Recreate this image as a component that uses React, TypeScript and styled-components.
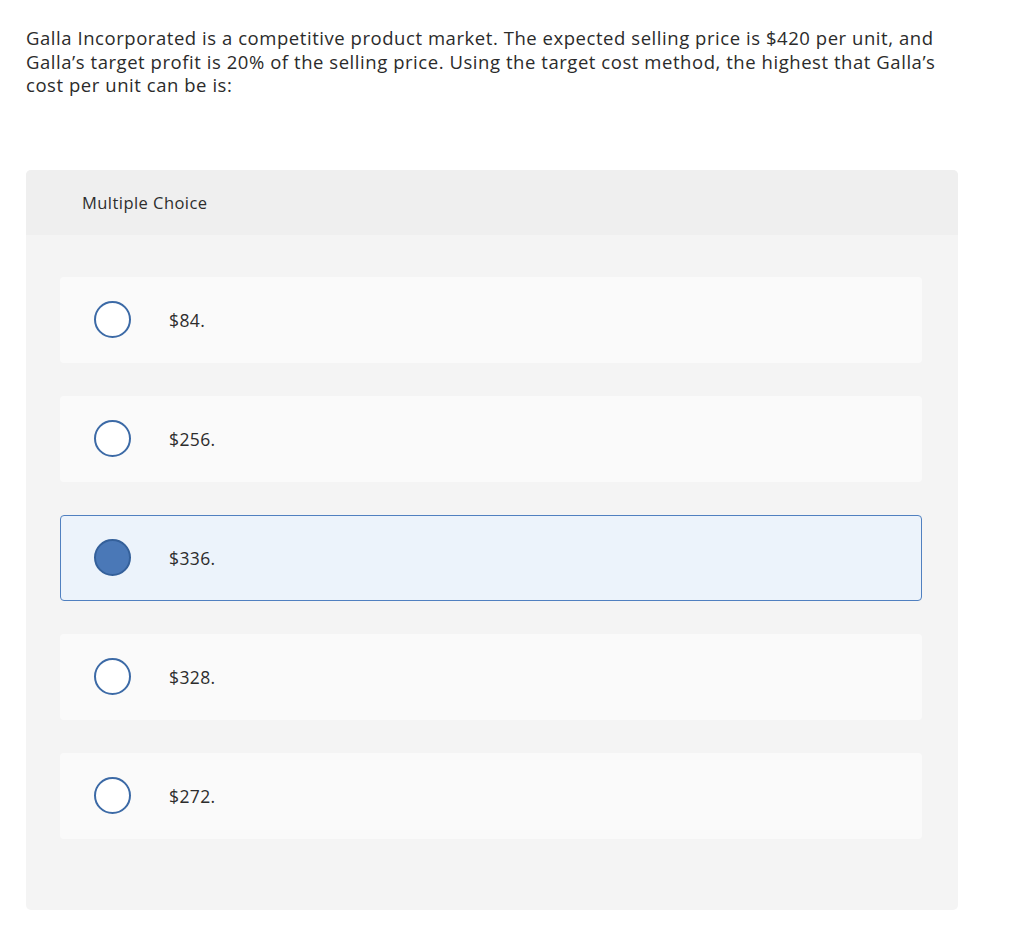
import styled, { createGlobalStyle } from "styled-components";

const GlobalStyle = createGlobalStyle`
  body {
    margin: 0;
    background: #ffffff;
    font-family: "Open Sans", "Lato", sans-serif;
    color: #2d2d2d;
  }
`;

const Page = styled.div`
  padding: 26px 66px 40px 26px;
`;

const Question = styled.p`
  margin: 0;
  font-size: 18.5px;
  letter-spacing: 0.55px;
  line-height: 23.5px;
  color: #2b2b2b;
  white-space: nowrap;
`;

const Panel = styled.section`
  margin-top: 73px;
  width: 932px;
  background: #f4f4f4;
  border-radius: 5px;
  overflow: hidden;
`;

const PanelHeader = styled.div`
  height: 65px;
  display: flex;
  align-items: center;
  padding-left: 56px;
  background: #efefef;
  font-size: 16.5px;
  letter-spacing: 0.45px;
  color: #2d2d2d;
`;

const Choices = styled.div`
  display: flex;
  flex-direction: column;
  gap: 33px;
  padding: 42px 36px 71px 34px;
`;

const Choice = styled.label<{ $selected?: boolean }>`
  display: flex;
  align-items: center;
  height: 86px;
  box-sizing: border-box;
  padding-left: 33px;
  border-radius: 4px;
  background: ${(p) => (p.$selected ? "#ecf3fb" : "#fafafa")};
  border: 1.5px solid ${(p) => (p.$selected ? "#5080c0" : "transparent")};
  cursor: pointer;
`;

const Radio = styled.span<{ $selected?: boolean }>`
  width: 37px;
  height: 37px;
  box-sizing: border-box;
  border-radius: 50%;
  border: 2px solid ${(p) => (p.$selected ? "#34609a" : "#3c6aa6")};
  background: ${(p) => (p.$selected ? "#4a78b7" : "#ffffff")};
  flex-shrink: 0;
`;

const ChoiceText = styled.span`
  margin-left: 38px;
  font-size: 17.5px;
  letter-spacing: 0.4px;
  color: #2d2d2d;
`;

const options = ["$84.", "$256.", "$336.", "$328.", "$272."];

export default function App() {
  const selected = 2;
  return (
    <>
      <GlobalStyle />
      <Page>
        <Question>
          Galla Incorporated is a competitive product market. The expected selling price is $420 per unit, and
          <br />
          Galla’s target profit is 20% of the selling price. Using the target cost method, the highest that Galla’s
          <br />
          cost per unit can be is:
        </Question>
        <Panel>
          <PanelHeader>Multiple Choice</PanelHeader>
          <Choices>
            {options.map((o, i) => (
              <Choice key={o} $selected={i === selected}>
                <Radio $selected={i === selected} />
                <ChoiceText>{o}</ChoiceText>
              </Choice>
            ))}
          </Choices>
        </Panel>
      </Page>
    </>
  );
}
